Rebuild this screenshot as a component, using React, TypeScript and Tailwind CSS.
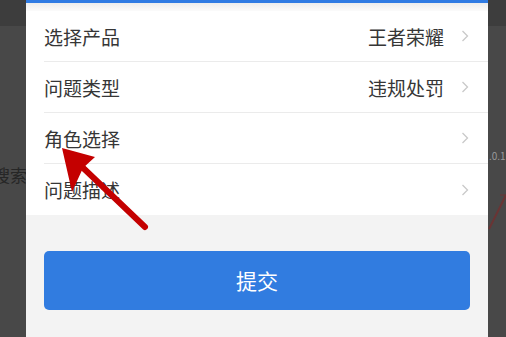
import React from 'react'

const rows = [
    { label: '选择产品', value: '王者荣耀' },
    { label: '问题类型', value: '违规处罚' },
    { label: '角色选择', value: '' },
    { label: '问题描述', value: '' },
]

const Chevron = () => (
    <svg width="8" height="12" viewBox="0 0 8 12" className="shrink-0">
        <polyline points="1.5,1 6.5,6 1.5,11" fill="none" stroke="#c9c9c9" strokeWidth="1.3" />
    </svg>
)

const App = () => {
    return (
        <div className="relative w-[506px] h-[337px] overflow-hidden bg-[#484848] flex font-['Noto_Sans_CJK_SC','Noto_Sans',sans-serif]">
            <div className="w-[26px] shrink-0 flex flex-col overflow-hidden">
                <div className="h-[26px] bg-[#3d3d3d]"></div>
                <div className="pt-[140px] flex justify-end">
                    <span className="text-[17px] leading-none text-[#262626] whitespace-nowrap -mr-[1px]">搜索</span>
                </div>
            </div>

            <div className="relative z-10 w-[462px] shrink-0 flex flex-col bg-[#f3f3f3]">
                <div className="h-[3px] bg-[#2f7be3]"></div>
                <div className="h-[8px] bg-gradient-to-b from-[#ececec] to-[#fbfbfb]"></div>
                <div className="bg-white">
                    {rows.map((row, i) => (
                        <div key={row.label} className="pl-[18px]">
                            <div className={`h-[51px] flex items-center pr-[19px] ${i < rows.length - 1 ? 'border-b border-[#ebebeb]' : ''}`}>
                                <span className="text-[19px] leading-none text-[#363636]">{row.label}</span>
                                <span className="ml-auto text-[19px] leading-none text-[#363636]">{row.value}</span>
                                <span className="ml-[17px]"><Chevron /></span>
                            </div>
                        </div>
                    ))}
                </div>
                <div className="px-[18px] pt-[36px]">
                    <button className="w-full h-[59px] rounded-[5px] bg-[#317ce0] text-white text-[21px] leading-none flex items-center justify-center">
                        提交
                    </button>
                </div>
            </div>

            <div className="w-[18px] shrink-0 flex flex-col">
                <div className="h-[26px] bg-[#3d3d3d]"></div>
                <div className="pt-[125px] pl-[1px] text-[10px] leading-none text-[#9a9a9a] whitespace-nowrap">.0.1</div>
            </div>

            <svg className="absolute left-0 top-0 z-20 pointer-events-none" width="506" height="337" viewBox="0 0 506 337">
                <line x1="489" y1="229" x2="506" y2="195" stroke="#6a3434" strokeWidth="2" />
                <line x1="500" y1="195" x2="506" y2="195" stroke="#6a3434" strokeWidth="1" />
                <line x1="145" y1="227" x2="78" y2="163" stroke="#c40000" strokeWidth="6" strokeLinecap="round" />
                <polygon points="62,148 95,157 83,168 72,192" fill="#c40000" />
            </svg>
        </div>
    )
}

export default App
